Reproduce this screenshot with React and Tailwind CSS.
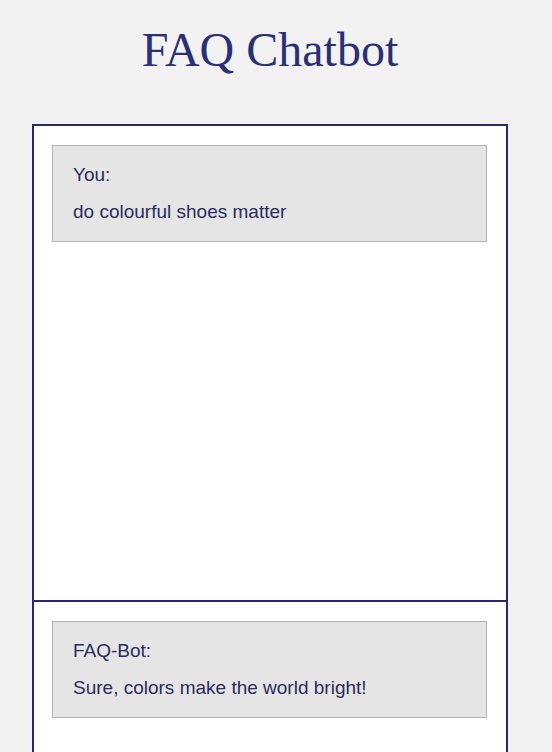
import React from "react";

const messages = [
  { from: "You", text: "do colourful shoes matter" },
  { from: "FAQ-Bot", text: "Sure, colors make the world bright!" },
];

function Message({ from, text }) {
  return (
    <div className="border border-[#b3b3b3] bg-[#e5e5e5] pl-[20px] pr-[20px] pt-[18px] pb-[18px] text-[19px] leading-[22px] text-[#2b2c5f]">
      <p>{from}:</p>
      <p className="mt-[15px]">{text}</p>
    </div>
  );
}

export default function App() {
  return (
    <div
      className="min-h-screen bg-[#f2f2f2] overflow-hidden"
      style={{ fontFamily: '"Liberation Sans", Arial, sans-serif' }}
    >
      <div className="ml-[32px] w-[476px]">
        <h1
          className="mt-[26px] mb-[50px] text-center text-[48px] leading-[48px] text-[#2b3075]"
          style={{ fontFamily: '"Liberation Serif", "Times New Roman", serif' }}
        >
          FAQ Chatbot
        </h1>

        <div className="border-2 border-[#26296b] bg-white">
          {/* chat history */}
          <div className="h-[474px] pt-[19px] pl-[18px] pr-[19px]">
            <Message {...messages[0]} />
          </div>

          {/* latest answer */}
          <div className="border-t-2 border-[#26296b] pt-[19px] pb-[60px] pl-[18px] pr-[19px]">
            <Message {...messages[1]} />
          </div>
        </div>
      </div>
    </div>
  );
}
